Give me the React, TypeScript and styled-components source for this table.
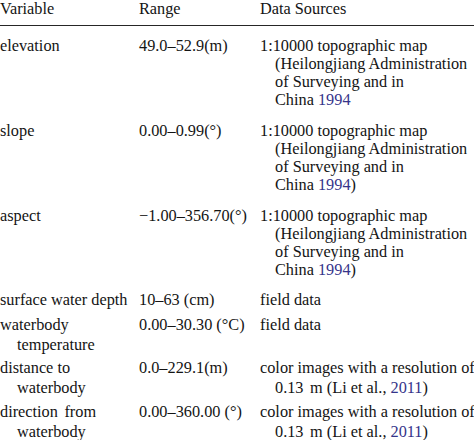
import React from "react";
import styled, { createGlobalStyle } from "styled-components";

const GlobalStyle = createGlobalStyle`
	html,
	body {
		margin: 0;
		padding: 0;
		background: #fff;
		overflow: hidden;
	}
`;

const Table = styled.div`
	width: 474px;
	font-family: "Liberation Serif", "Times New Roman", serif;
	font-size: 16.3px;
	color: #141414;
`;

const Row = styled.div<{ $lh: number; $top: number }>`
	display: grid;
	grid-template-columns: 139px 121px 1fr;
	line-height: ${p => p.$lh}px;
	padding-top: ${p => p.$top}px;
	white-space: nowrap;
`;

const HeadRow = styled(Row)`
	padding-bottom: 9px;
	border-bottom: 1.5px solid #262626;
`;

const Cell = styled.div<{ $indent: number }>`
	& > div + div {
		padding-left: ${p => p.$indent}px;
	}
`;

const Cite = styled.span`
	color: #35348a;
`;

const Wide = styled.span`
	word-spacing: 2.5px;
`;

interface TableRow {
	variable: React.ReactNode[];
	range: React.ReactNode;
	source: React.ReactNode[];
	lh: number;
	top: number;
}

const topoMap = (closed: boolean) => [
	"1:10000 topographic map",
	"(Heilongjiang Administration",
	"of Surveying and in",
	<>
		China <Cite>1994</Cite>
		{closed ? ")" : ""}
	</>,
];

const colorImages = [
	"color images with a resolution of",
	<>
		<Wide>0.13 m</Wide> (Li et al., <Cite>2011</Cite>)
	</>,
];

const rows: TableRow[] = [
	{ variable: ["elevation"], range: "49.0–52.9(m)", source: topoMap(false), lh: 18, top: 11 },
	{ variable: ["slope"], range: "0.00–0.99(°)", source: topoMap(true), lh: 18, top: 13 },
	{ variable: ["aspect"], range: "−1.00–356.70(°)", source: topoMap(true), lh: 18, top: 12.5 },
	{ variable: ["surface water depth"], range: "10–63 (cm)", source: ["field data"], lh: 20, top: 11.5 },
	{ variable: ["waterbody", "temperature"], range: "0.00–30.30 (°C)", source: ["field data"], lh: 20, top: 4.5 },
	{ variable: ["distance to", "waterbody"], range: "0.0–229.1(m)", source: colorImages, lh: 20, top: 3 },
	{
		variable: [<Wide>direction from</Wide>, "waterbody"],
		range: "0.00–360.00 (°)",
		source: colorImages,
		lh: 20,
		top: 4,
	},
];

const App = () => (
	<>
		<GlobalStyle />
		<Table>
			<HeadRow $lh={14} $top={2}>
				<div>Variable</div>
				<div>Range</div>
				<div>Data Sources</div>
			</HeadRow>
			{rows.map((row, i) => (
				<Row key={i} $lh={row.lh} $top={row.top}>
					<Cell $indent={17}>
						{row.variable.map((line, j) => (
							<div key={j}>{line}</div>
						))}
					</Cell>
					<Cell $indent={0}>
						<div>{row.range}</div>
					</Cell>
					<Cell $indent={15}>
						{row.source.map((line, j) => (
							<div key={j}>{line}</div>
						))}
					</Cell>
				</Row>
			))}
		</Table>
	</>
);

export default App;
